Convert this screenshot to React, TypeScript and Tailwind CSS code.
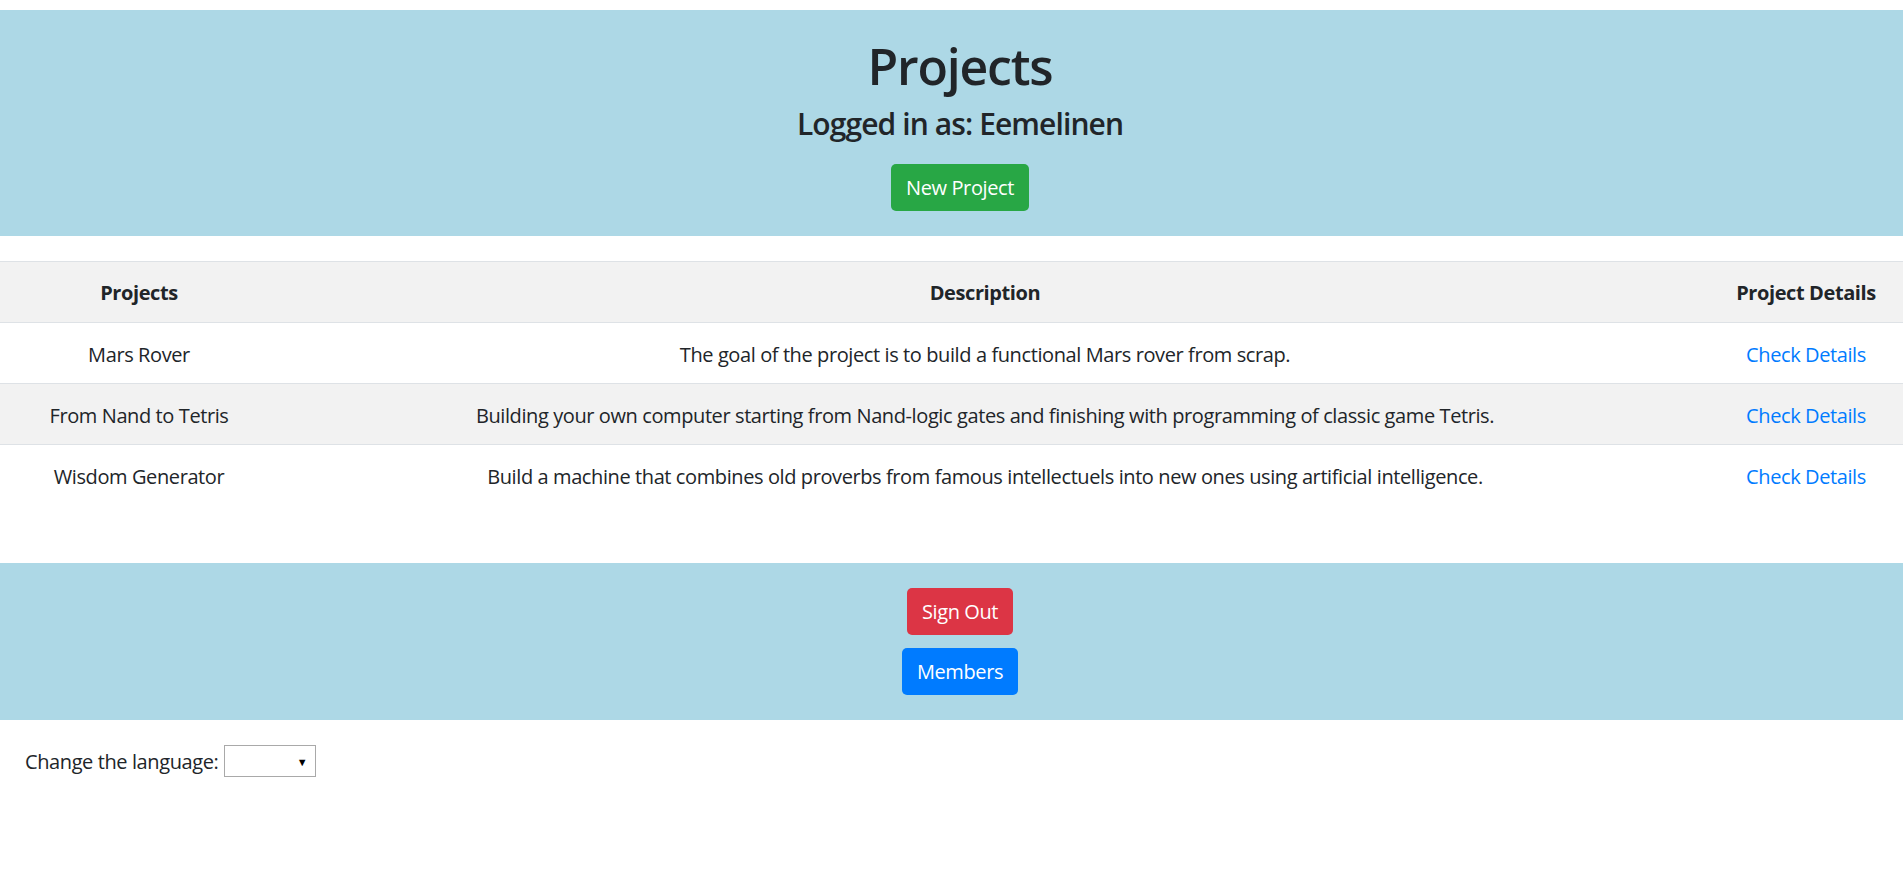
import React from "react";

const rows = [
  {
    name: "Mars Rover",
    desc: "The goal of the project is to build a functional Mars rover from scrap.",
  },
  {
    name: "From Nand to Tetris",
    desc: "Building your own computer starting from Nand-logic gates and finishing with programming of classic game Tetris.",
  },
  {
    name: "Wisdom Generator",
    desc: "Build a machine that combines old proverbs from famous intellectuels into new ones using artificial intelligence.",
  },
];

export default function App() {
  return (
    <div className="w-full overflow-hidden bg-white">
      <div className="w-[1920px] font-['Open_Sans',sans-serif] text-[20px] leading-[30px] tracking-[-0.4px] text-[#212529]">
        <header className="mt-[10px] bg-[#add8e6] pt-[26px] pb-[25px] flex flex-col items-center">
          <h1 className="text-[50px] leading-[60px] font-semibold tracking-[-1.2px]">Projects</h1>
          <h4 className="mt-[10px] text-[30px] leading-[36px] font-semibold tracking-[-0.9px]">Logged in as: Eemelinen</h4>
          <button className="mt-[22px] h-[47px] px-[15px] pt-[1px] rounded-[5px] bg-[#28a745] text-white text-[20px] leading-[30px]">
            New Project
          </button>
        </header>

        <table className="mt-[25px] table-fixed w-[1920px] border-collapse text-center">
          <colgroup>
            <col className="w-[278px]" />
            <col className="w-[1414px]" />
            <col className="w-[228px]" />
          </colgroup>
          <thead>
            <tr className="bg-[#f2f2f2] border-t border-b border-[#dee2e6]">
              <th className="px-[15px] pt-[16px] pb-[14px] font-bold">Projects</th>
              <th className="px-[15px] pt-[16px] pb-[14px] font-bold">Description</th>
              <th className="px-[15px] pt-[16px] pb-[14px] font-bold">Project Details</th>
            </tr>
          </thead>
          <tbody>
            {rows.map((r, i) => (
              <tr
                key={r.name}
                className={
                  (i % 2 === 1 ? "bg-[#f2f2f2] " : "bg-white ") +
                  (i < rows.length - 1 ? "border-b border-[#dee2e6]" : "")
                }
              >
                <td className="px-[15px] pt-[17px] pb-[13px]">{r.name}</td>
                <td className="px-[15px] pt-[17px] pb-[13px]">{r.desc}</td>
                <td className="px-[15px] pt-[17px] pb-[13px]">
                  <a className="text-[#007bff]" href="#">Check Details</a>
                </td>
              </tr>
            ))}
          </tbody>
        </table>

        <footer className="mt-[58px] bg-[#add8e6] py-[25px] flex flex-col items-center gap-[13px]">
          <button className="h-[47px] px-[15px] pt-[1px] rounded-[5px] bg-[#dc3545] text-white text-[20px] leading-[30px]">
            Sign Out
          </button>
          <button className="h-[47px] px-[15px] pt-[1px] rounded-[5px] bg-[#007bff] text-white text-[20px] leading-[30px]">
            Members
          </button>
        </footer>

        <div className="mt-[25px] pl-[25px] flex items-center gap-[6px]">
          <span className="pt-[1px]">Change the language:</span>
          <div className="w-[92px] h-[32px] border border-[#a9a9a9] bg-white flex items-center justify-end pr-[8px]">
            <span className="text-[11px] leading-none text-black">▼</span>
          </div>
        </div>
      </div>
    </div>
  );
}
